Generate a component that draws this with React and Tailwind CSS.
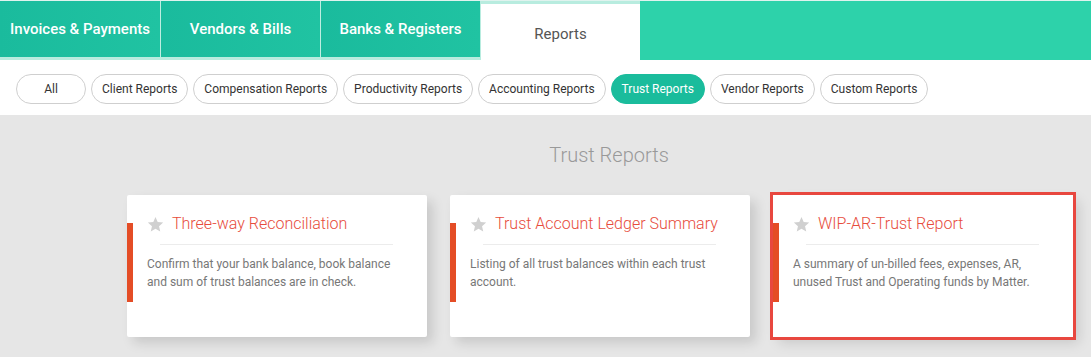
import React, { useState } from 'react';

// Reports page - top tabs, filter pills and report cards
const tabs = ['Invoices & Payments', 'Vendors & Bills', 'Banks & Registers'];

const filters = [
  { id: 'all', label: 'All', wide: true },
  { id: 'client', label: 'Client Reports' },
  { id: 'compensation', label: 'Compensation Reports' },
  { id: 'productivity', label: 'Productivity Reports' },
  { id: 'accounting', label: 'Accounting Reports' },
  { id: 'trust', label: 'Trust Reports' },
  { id: 'vendor', label: 'Vendor Reports' },
  { id: 'custom', label: 'Custom Reports' }
];

const reports = [
  {
    title: 'Three-way Reconciliation',
    text: 'Confirm that your bank balance, book balance and sum of trust balances are in check.'
  },
  {
    title: 'Trust Account Ledger Summary',
    text: 'Listing of all trust balances within each trust account.'
  },
  {
    title: 'WIP-AR-Trust Report',
    text: 'A summary of un-billed fees, expenses, AR, unused Trust and Operating funds by Matter.',
    selected: true
  }
];

const Star = () => (
  <svg width="17" height="17" viewBox="0 0 24 24" className="shrink-0">
    <path
      fill="#d0d0d0"
      d="M12 1.5l3.1 7.1 7.7.7-5.8 5.1 1.7 7.6L12 18l-6.7 4 1.7-7.6-5.8-5.1 7.7-.7z"
    />
  </svg>
);

const ReportCard = ({ report }) => (
  <div
    className={`relative w-[300px] h-[142px] bg-white shadow-[6px_6px_12px_rgba(0,0,0,0.13)] pl-[20px] pr-[34px] pt-[20px] ${
      report.selected ? 'ring-[3px] ring-[#e8473f] rounded-none' : 'rounded-[2px]'
    }`}
  >
    {/* accent bar */}
    <div className="absolute left-0 top-[28px] w-[6px] h-[79px] bg-[#e44d26]" />
    <div className="flex items-center gap-[8px] h-[18px]">
      <Star />
      <span className="text-[16px] font-light text-[#e74c3c] leading-none whitespace-nowrap">{report.title}</span>
    </div>
    <div className="ml-[13px] mt-[11px] border-t border-[#ececec]" />
    <p className="mt-[10px] text-[12px] leading-[18px] text-[#777] pr-[2px]">{report.text}</p>
  </div>
);

export default function App() {
  const [active, setActive] = useState('trust');

  return (
    <div className="w-[1091px] h-[357px] bg-[#e6e6e6] overflow-hidden font-['Roboto',sans-serif]">
      {/* Top tabs */}
      <div className="flex h-[60px] bg-[#2dd2aa] border-t border-[#dff3ee]">
        {tabs.map((t, i) => (
          <div
            key={t}
            className={`w-[160px] flex items-center justify-center bg-gradient-to-r from-[#1abb9d] to-[#20c3a2] text-white text-[15px] font-medium border-b-[3px] border-[#b8ecdf] ${
              i > 0 ? 'border-l border-l-[#bdeee1]' : ''
            }`}
          >
            {t}
          </div>
        ))}
        <div className="w-[160px] flex items-center justify-center bg-white text-[#555] text-[15px] border-t-[3px] border-l border-[#b8ecdf] pt-[4px]">
          Reports
        </div>
      </div>

      {/* Filter pills */}
      <div className="h-[55px] bg-white flex items-center gap-[5px] pl-[16px] pt-[3px]">
        {filters.map(f => (
          <button
            key={f.id}
            onClick={() => setActive(f.id)}
            className={`h-[30px] rounded-full text-[12px] leading-none ${f.wide ? 'w-[70px]' : 'px-[10px]'} ${
              active === f.id
                ? 'bg-[#1abc9c] text-white border border-[#1abc9c]'
                : 'bg-white text-[#333] border border-[#cfcfcf]'
            }`}
          >
            {f.label}
          </button>
        ))}
      </div>

      {/* Content */}
      <div className="pl-[127px]">
        <h2 className="text-center text-[20px] font-light text-[#999] pt-[28px] leading-[24px]">Trust Reports</h2>
        <div className="flex gap-[23px] mt-[28px]">
          {reports.map(r => (
            <ReportCard key={r.title} report={r} />
          ))}
        </div>
      </div>
    </div>
  );
}
